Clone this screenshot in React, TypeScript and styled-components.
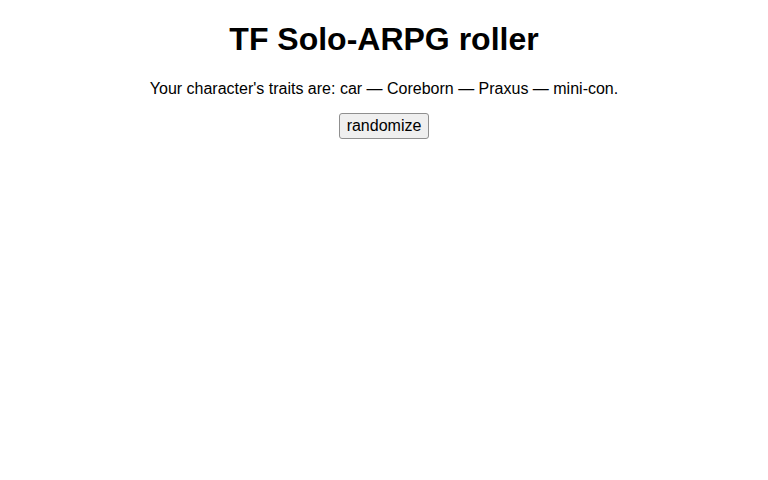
import React, { useState } from 'react'
import styled, { createGlobalStyle } from 'styled-components'

const GlobalStyle = createGlobalStyle`
  body {
    margin: 0;
    background: #fff;
    color: #000;
    font-family: "Liberation Sans", Arial, sans-serif;
  }
`

const Page = styled.div`
  display: flex;
  flex-direction: column;
  align-items: center;
  text-align: center;
`

const Title = styled.h1`
  font-size: 32px;
  font-weight: bold;
  margin: 21px 0 22px;
`

const Traits = styled.p`
  font-size: 16px;
  margin: 0 0 15px;
`

const RollButton = styled.button`
  font-family: "Liberation Sans", Arial, sans-serif;
  font-size: 16px;
  padding: 3px 7px;
  color: #000;
  background: #efefef;
  border: 1px solid #8f8f8f;
  border-radius: 3px;
`

const bodies = ['car', 'jet', 'truck', 'tank', 'beast']
const origins = ['Coreborn', 'Cybertronian', 'Earthborn']
const factions = ['Praxus', 'Iacon', 'Kaon', 'Vos']
const sizes = ['mini-con', 'standard', 'titan']

const pick = (list: string[]) => list[Math.floor(Math.random() * list.length)]

function App() {
  const [traits, setTraits] = useState(['car', 'Coreborn', 'Praxus', 'mini-con'])

  const randomize = () => {
    setTraits([pick(bodies), pick(origins), pick(factions), pick(sizes)])
  }

  return (
    <Page>
      <GlobalStyle />
      <Title>TF Solo-ARPG roller</Title>
      <Traits>Your character's traits are: {traits.join(' — ')}.</Traits>
      <div>
        <RollButton onClick={randomize}>randomize</RollButton>
      </div>
    </Page>
  )
}

export default App
